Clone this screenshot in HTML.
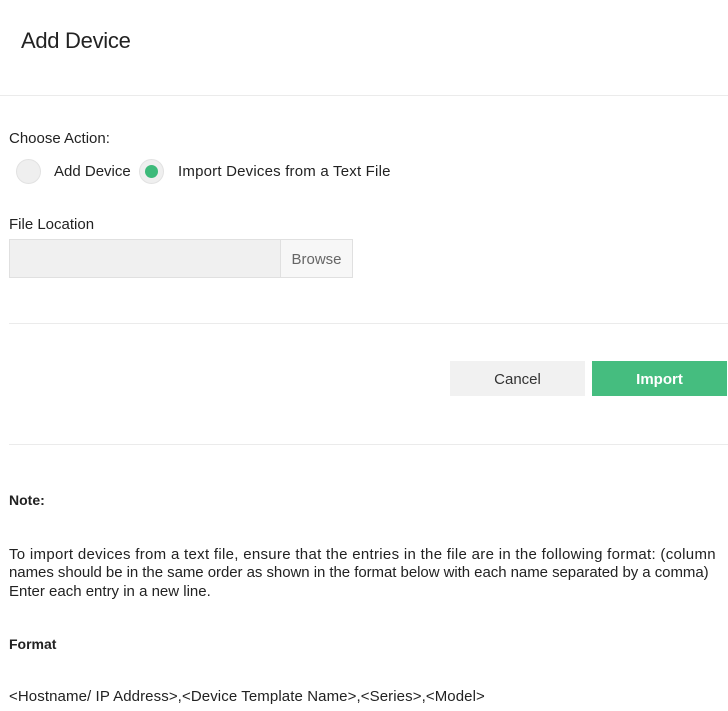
<!DOCTYPE html>
<html><head><style>
*{margin:0;padding:0;box-sizing:border-box}
body{width:728px;height:711px;background:#fff;font-family:"Liberation Sans",sans-serif;color:#222;position:relative;overflow:hidden}
.a{position:absolute;white-space:nowrap}
.hr{position:absolute;height:1px;background:#ebebeb}
.t{font-size:15px}
</style></head><body>
<div class="a" style="left:21px;top:28px;font-size:22px;letter-spacing:-0.3px">Add Device</div>
<div class="hr" style="left:0;width:728px;top:95px"></div>
<div class="a" style="left:9px;top:130px;font-size:15px">Choose Action:</div>
<div class="a" style="left:16px;top:159px;width:25px;height:25px;border-radius:50%;background:#efefef;border:1px solid #e2e2e2"></div>
<div class="a" style="left:54px;top:163px;font-size:15px">Add Device</div>
<div class="a" style="left:139px;top:159px;width:25px;height:25px;border-radius:50%;background:#efefef;border:1px solid #e2e2e2"></div>
<div class="a" style="left:145px;top:165px;width:13px;height:13px;border-radius:50%;background:#3dba7a"></div>
<div class="a" style="left:178px;top:163px;font-size:15px;letter-spacing:0.2px">Import Devices from a Text File</div>
<div class="a" style="left:9px;top:216px;font-size:15px">File Location</div>
<div class="a" style="left:9px;top:239px;width:344px;height:39px;background:#f0f0f0;border:1px solid #e0e0e0"></div>
<div class="a" style="left:280px;top:239px;width:73px;height:39px;background:#f7f7f7;border:1px solid #e0e0e0;font-size:15px;color:#666;text-align:center;line-height:40px">Browse</div>
<div class="hr" style="left:9px;width:719px;top:323px"></div>
<div class="a" style="left:450px;top:361px;width:135px;height:35px;background:#f1f1f1;font-size:15px;text-align:center;line-height:37px;color:#333">Cancel</div>
<div class="a" style="left:592px;top:361px;width:135px;height:35px;background:#45bd7f;font-size:15px;text-align:center;line-height:37px;color:#fff;font-weight:bold">Import</div>
<div class="hr" style="left:9px;width:719px;top:444px"></div>
<div class="a" style="left:9px;top:492px;font-size:14px;font-weight:bold">Note:</div>
<div class="a t" style="left:9px;top:546px;letter-spacing:0.3px">To import devices from a text file, ensure that the entries in the file are in the following format: (column</div>
<div class="a t" style="left:9px;top:564px;letter-spacing:-0.05px">names should be in the same order as shown in the format below with each name separated by a comma)</div>
<div class="a t" style="left:9px;top:583px;letter-spacing:0px">Enter each entry in a new line.</div>
<div class="a" style="left:9px;top:636px;font-size:14px;font-weight:bold">Format</div>
<div class="a" style="left:9px;top:688px;font-size:15px;letter-spacing:0.1px">&lt;Hostname/ IP Address&gt;,&lt;Device Template Name&gt;,&lt;Series&gt;,&lt;Model&gt;</div>
</body></html>
